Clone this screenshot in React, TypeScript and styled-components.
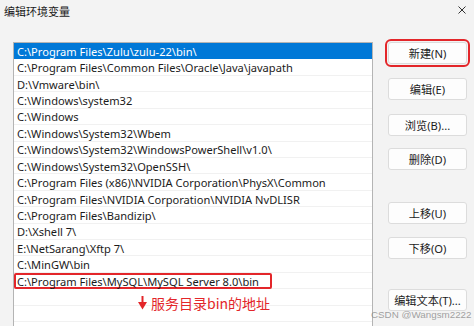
import React from "react";
import styled, { createGlobalStyle } from "styled-components";

const Global = createGlobalStyle`
  html, body { margin: 0; padding: 0; background: #f3f3f3; }
  body { font-family: "Noto Sans", "Noto Sans CJK SC", sans-serif; }
`;

const Dialog = styled.div`
  position: relative;
  width: 474px;
  height: 326px;
  overflow: hidden;
  background: #f3f3f3;
  display: flex;
  flex-direction: column;
`;

const TitleBar = styled.div`
  height: 22px;
  display: flex;
  align-items: center;
  justify-content: space-between;
  padding: 0 4px 0 4px;
  flex-shrink: 0;
`;

const Title = styled.span`
  font-family: "Noto Sans CJK SC", sans-serif;
  font-size: 11px;
  color: #1a1a1a;
`;

const CloseIcon = styled.svg`
  width: 8px;
  height: 8px;
  margin-right: 4px;
  margin-top: -2px;
`;

const Body = styled.div`
  display: flex;
  flex: 1;
  padding: 20px 0 0 13px;
  gap: 15px;
  align-items: flex-start;
`;

const List = styled.div`
  width: 360px;
  height: 300px;
  background: #ffffff;
  border: 1px solid #b4b4b4;
  box-sizing: border-box;
  flex-shrink: 0;
`;

const Row = styled.div<{ $selected?: boolean }>`
  height: 16.43px;
  box-sizing: border-box;
  display: flex;
  align-items: center;
  padding-left: 3px;
  font-family: "Noto Sans", "Noto Sans CJK SC", sans-serif;
  font-size: 11.1px;
  white-space: nowrap;
  color: ${(p) => (p.$selected ? "#ffffff" : "#1b1b1b")};
  background: ${(p) => (p.$selected ? "#0078d7" : "transparent")};
  box-shadow: inset 0 -1px 0 ${(p) => (p.$selected ? "#0078d7" : "#f1f1f1")};
`;

const MarkedRow = styled(Row)`
  padding-left: 0;
`;

const Marked = styled.span`
  display: flex;
  align-items: center;
  height: 100%;
  width: 258px;
  box-sizing: border-box;
  border: 2px solid #e3262a;
  border-radius: 2px;
  padding-left: 1px;
`;

const Buttons = styled.div`
  display: flex;
  flex-direction: column;
  width: 79px;
`;

const Button = styled.div<{ $gap?: number; $marked?: boolean }>`
  height: 22px;
  margin-top: ${(p) => p.$gap ?? 13}px;
  box-sizing: border-box;
  border: 1px solid #dcdcdc;
  border-radius: 3px;
  background: #fdfdfd;
  display: flex;
  align-items: center;
  justify-content: center;
  font-family: "Noto Sans", "Noto Sans CJK SC", sans-serif;
  font-size: 11.2px;
  white-space: nowrap;
  color: #1b1b1b;
  ${(p) => (p.$marked ? "outline: 2px solid #e3262a; outline-offset: 1px;" : "")}
`;

const Annotation = styled.div`
  position: absolute;
  left: 138px;
  top: 293px;
  display: flex;
  align-items: center;
  gap: 4px;
  color: #e3262a;
  font-family: "Noto Sans CJK SC", sans-serif;
  font-size: 14px;
  white-space: nowrap;
`;

const Watermark = styled.div`
  position: absolute;
  left: 371px;
  top: 309px;
  font-family: "Liberation Sans", sans-serif;
  font-size: 9.8px;
  white-space: nowrap;
  color: rgba(130, 130, 130, 0.75);
`;

const paths = [
  "C:\\Program Files\\Zulu\\zulu-22\\bin\\",
  "C:\\Program Files\\Common Files\\Oracle\\Java\\javapath",
  "D:\\Vmware\\bin\\",
  "C:\\Windows\\system32",
  "C:\\Windows",
  "C:\\Windows\\System32\\Wbem",
  "C:\\Windows\\System32\\WindowsPowerShell\\v1.0\\",
  "C:\\Windows\\System32\\OpenSSH\\",
  "C:\\Program Files (x86)\\NVIDIA Corporation\\PhysX\\Common",
  "C:\\Program Files\\NVIDIA Corporation\\NVIDIA NvDLISR",
  "C:\\Program Files\\Bandizip\\",
  "D:\\Xshell 7\\",
  "E:\\NetSarang\\Xftp 7\\",
  "C:\\MinGW\\bin",
];

const buttons: { label: string; gap?: number; marked?: boolean }[] = [
  { label: "新建(N)", gap: 0, marked: true },
  { label: "编辑(E)", gap: 14 },
  { label: "浏览(B)...", gap: 14 },
  { label: "删除(D)", gap: 12 },
  { label: "上移(U)", gap: 32 },
  { label: "下移(O)", gap: 13 },
  { label: "编辑文本(T)...", gap: 30 },
];

export default function App() {
  return (
    <Dialog>
      <Global />
      <TitleBar>
        <Title>编辑环境变量</Title>
        <CloseIcon viewBox="0 0 8 8">
          <path d="M0.5 0.5 L7.5 7.5 M7.5 0.5 L0.5 7.5" stroke="#333" strokeWidth="1" fill="none" />
        </CloseIcon>
      </TitleBar>
      <Body>
        <List>
          {paths.map((p, i) => (
            <Row key={i} $selected={i === 0}>
              {p}
            </Row>
          ))}
          <MarkedRow>
            <Marked>C:\Program Files\MySQL\MySQL Server 8.0\bin</Marked>
          </MarkedRow>
          <Row />
          <Row />
          <Row />
        </List>
        <Buttons>
          {buttons.map((b) => (
            <Button key={b.label} $gap={b.gap} $marked={b.marked}>
              {b.label}
            </Button>
          ))}
        </Buttons>
      </Body>
      <Annotation>
        <svg width="9" height="14" viewBox="0 0 9 14">
          <path d="M4.5 0 L4.5 8" stroke="#e3262a" strokeWidth="2" />
          <path d="M0 6 L9 6 L4.5 13.5 Z" fill="#e3262a" />
        </svg>
        <span>服务目录bin的地址</span>
      </Annotation>
      <Watermark>CSDN @Wangsm2222</Watermark>
    </Dialog>
  );
}
